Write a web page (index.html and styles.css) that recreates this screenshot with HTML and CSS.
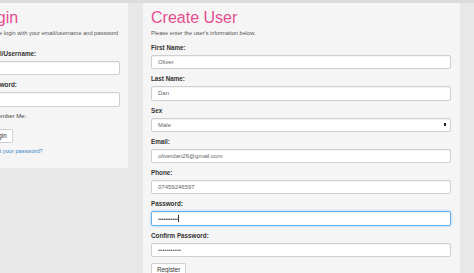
FILE: index.html
```html
<!DOCTYPE html>
<html>
<head>
<meta charset="utf-8">
<link rel="stylesheet" href="styles.css">
</head>
<body>
<div class="topbar"></div>
<div class="page">
  <section class="panel login">
    <h2 class="title login-title">Login</h2>
    <p class="desc">Please login with your email/username and password</p>
    <div class="group">
      <label class="lbl">Email/Username:</label>
      <input class="field" type="text" value="">
    </div>
    <div class="group">
      <label class="lbl">Password:</label>
      <input class="field" type="password" value="">
    </div>
    <div class="group remember">
      <label class="lbl plain">Remember Me:</label>
    </div>
    <button class="btn login-btn">Login</button>
    <a class="link" href="#">Forgot your password?</a>
  </section>
  <section class="panel create">
    <h2 class="title">Create User</h2>
    <p class="desc">Please enter the user's information below.</p>
    <div class="group">
      <label class="lbl">First Name:</label>
      <input class="field" type="text" value="Oliver">
    </div>
    <div class="group">
      <label class="lbl">Last Name:</label>
      <input class="field" type="text" value="Dan">
    </div>
    <div class="group">
      <label class="lbl">Sex</label>
      <div class="field select"><span>Male</span><span class="arrow"></span></div>
    </div>
    <div class="group">
      <label class="lbl">Email:</label>
      <input class="field" type="text" value="oliverdan26@gmail.com">
    </div>
    <div class="group">
      <label class="lbl">Phone:</label>
      <input class="field" type="text" value="07459246597">
    </div>
    <div class="group">
      <label class="lbl">Password:</label>
      <div class="field focus"><span class="dots">•••••••••••</span><span class="caret"></span></div>
    </div>
    <div class="group">
      <label class="lbl">Confirm Password:</label>
      <input class="field" type="password" value="oliverdan26">
    </div>
    <button class="btn register-btn">Register</button>
  </section>
</div>
</body>
</html>
```
FILE: styles.css
```css
html, body {
  margin: 0;
  padding: 0;
}
body {
  background: #e8e8e8;
  font-family: "Liberation Sans", Arial, sans-serif;
  color: #333;
  width: 474px;
  height: 273px;
  overflow: hidden;
}
.topbar {
  height: 3px;
  background: #dcdcdc;
}
.page {
  display: flex;
  align-items: flex-start;
  gap: 15px;
  margin-left: -23px;
}
.panel {
  background: #f5f5f5;
  padding: 6px 8px 0 8px;
  box-sizing: border-box;
  display: flex;
  flex-direction: column;
  align-items: flex-start;
}
.login {
  width: 151px;
  padding-bottom: 12.7px;
}
.create {
  width: 317px;
  height: 270px;
  overflow: hidden;
}
.title {
  margin: 0.2px 0 0 0;
  font-size: 16px;
  line-height: 18px;
  font-weight: normal;
  color: #e54d8f;
}
.login-title {
  margin-left: -6px;
}
.desc {
  margin: 1.8px 0 6px 0;
  font-size: 5.65px;
  line-height: 8px;
  color: #555;
}
.login .desc {
  margin-bottom: 12px;
}
.group {
  display: flex;
  flex-direction: column;
  align-self: stretch;
  margin-bottom: 5px;
}
.lbl {
  font-size: 6.3px;
  line-height: 9px;
  font-weight: bold;
  color: #333;
  margin-bottom: 3px;
}
.lbl.plain {
  font-weight: normal;
  font-size: 6px;
  color: #444;
}
.field {
  box-sizing: border-box;
  height: 14.3px;
  width: 100%;
  margin: 0;
  padding: 0 6px;
  border: 1px solid #cfcfcf;
  border-radius: 2px;
  background: #fff;
  box-shadow: inset 0 1px 1px rgba(0,0,0,0.05);
  font-family: "Liberation Sans", Arial, sans-serif;
  font-size: 6px;
  color: #666;
  outline: none;
}
.create .field {
  width: 300px;
}
.select {
  display: flex;
  align-items: center;
  justify-content: space-between;
  padding-right: 4px;
}
.arrow {
  width: 2px;
  height: 2.5px;
  background: #222;
}
.focus {
  display: flex;
  align-items: center;
  border-color: #66afe9;
  box-shadow: inset 0 1px 1px rgba(0,0,0,0.05), 0 0 3px rgba(102,175,233,0.6);
}
.dots {
  font-size: 6px;
  letter-spacing: -0.3px;
  color: #555;
}
.caret {
  width: 0.6px;
  height: 7px;
  background: #333;
  margin-left: 0.5px;
}
.remember {
  margin-bottom: 5.4px;
}
.btn {
  box-sizing: border-box;
  height: 14px;
  margin: 0;
  border: 1px solid #cfcfcf;
  border-radius: 2px;
  background: #fff;
  font-family: "Liberation Sans", Arial, sans-serif;
  font-size: 6.3px;
  color: #333;
  line-height: 12px;
}
.login-btn {
  padding: 0 5.3px;
}
.register-btn {
  padding: 0 5px;
  margin-top: 1px;
}
.link {
  margin-top: 4.3px;
  font-size: 5.65px;
  line-height: 8px;
  color: #3a86c4;
  text-decoration: none;
}
```
